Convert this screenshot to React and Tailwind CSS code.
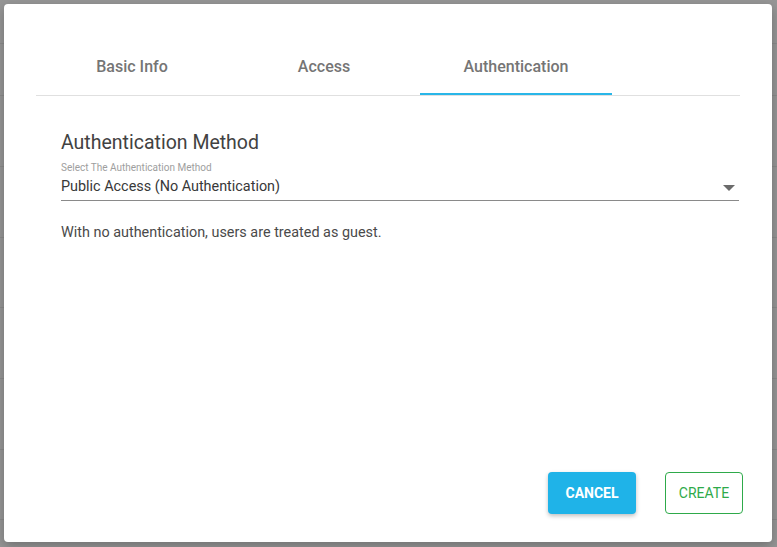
import React from "react";

function Tab({ label, active }) {
  return (
    <div className="relative w-[192px] h-[58px] flex items-center justify-center pt-[1px]">
      <span className="text-[16px] font-medium text-[#757575] leading-none">{label}</span>
      {active && <div className="absolute left-0 right-0 bottom-0 h-[2px] bg-[#29b6e8]" />}
    </div>
  );
}

export default function App() {
  const rows = [45, 53, 72, 72, 71, 72, 72, 71, 60];
  return (
    <div
      className="relative w-[777px] h-[547px] overflow-hidden bg-[#969696]"
      style={{ fontFamily: "Roboto, 'Liberation Sans', sans-serif" }}
    >
      <div className="flex flex-col">
        {rows.map((h, i) => (
          <div key={i} className="border-b border-[#8b8b8b] shrink-0" style={{ height: h - 1 }} />
        ))}
      </div>
      <div className="absolute left-[4px] top-[4px] w-[768px] h-[538px] bg-white rounded-[4px] shadow-[0_4px_12px_rgba(0,0,0,0.25)] flex flex-col">
        <div className="mt-[33px] mx-[32px] flex border-b border-[#e0e0e0]">
          <Tab label="Basic Info" />
          <Tab label="Access" />
          <Tab label="Authentication" active />
        </div>
        <div className="pl-[57px] pr-[33px] pt-[35px]">
          <div className="text-[19.5px] leading-[24px] text-[#424242]">Authentication Method</div>
          <div className="mt-[7px] text-[10px] leading-[12px] text-[#9e9e9e]">Select The Authentication Method</div>
          <div className="mt-[3px] flex items-center justify-between border-b border-[#8a8a8a] h-[20px] pb-[3px] box-content">
            <span className="text-[14.4px] leading-[16px] text-[#383838]">Public Access (No Authentication)</span>
            <svg width="12" height="6" viewBox="0 0 12 6" className="mr-[4px] mt-[1px]">
              <path d="M0 0 L12 0 L6 6 Z" fill="#6b6b6b" />
            </svg>
          </div>
          <div className="mt-[24px] text-[14.4px] leading-[16px] text-[#4a4a4a]">
            With no authentication, users are treated as guest.
          </div>
        </div>
        <div className="flex-1" />
        <div className="flex justify-end gap-[29px] pr-[29px] pb-[28px]">
          <button className="w-[88px] h-[42px] rounded-[4px] bg-[#1fb3e8] text-white text-[14px] font-bold shadow-[0_2px_4px_rgba(0,0,0,0.25)]">
            CANCEL
          </button>
          <button className="w-[78px] h-[42px] rounded-[4px] border border-[#2eaa4a] text-[#2eaa4a] text-[14px] font-normal bg-white">
            CREATE
          </button>
        </div>
      </div>
    </div>
  );
}
